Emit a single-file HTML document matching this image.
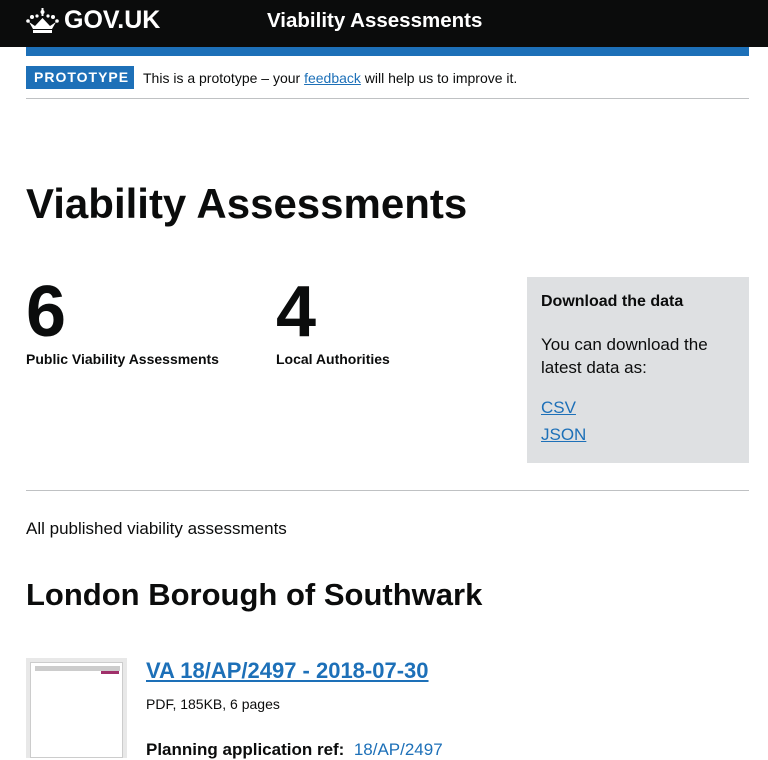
<!DOCTYPE html>
<html><head><style>
*{margin:0;padding:0;box-sizing:border-box}
body{width:768px;height:754px;overflow:hidden;font-family:"Liberation Sans",Arial,sans-serif;color:#0b0c0c;background:#fff;position:relative}
.hdr{position:absolute;left:0;top:0;width:768px;height:47px;background:#0b0c0c;color:#fff}
.a{position:absolute;white-space:nowrap}
a{color:#1d70b8;text-decoration:underline}
</style></head><body>
<div class="hdr">
<svg class="a" style="left:26px;top:8px" width="33" height="27" viewBox="0 0 33 27"><g fill="#fff"><circle cx="16.5" cy="4" r="2"/><rect x="15.5" y="0" width="2" height="8"/><circle cx="6" cy="9" r="2"/><circle cx="27" cy="9" r="2"/><circle cx="2" cy="13" r="1.8"/><circle cx="31" cy="13" r="1.8"/><circle cx="11" cy="8" r="1.6"/><circle cx="22" cy="8" r="1.6"/><path d="M3 14 L7 21 H26 L30 14 L24 18 L16.5 10 L9 18 Z"/><rect x="7" y="22" width="19" height="3"/></g></svg>
<div class="a" style="left:64px;top:6px;font-size:25px;font-weight:bold">GOV.UK</div>
<div class="a" style="left:267px;top:9px;font-size:20.5px;font-weight:bold">Viability Assessments</div>
</div>
<div class="a" style="left:26px;top:47px;width:723px;height:9px;background:#1d70b8"></div>
<div class="a" style="left:26px;top:66px;width:108px;height:23px;background:#1d70b8;color:#fff;font-weight:bold;font-size:14px;letter-spacing:1px;padding:3px 0 0 8px">PROTOTYPE</div>
<div class="a" style="left:143px;top:70px;font-size:14px">This is a prototype – your <a>feedback</a> will help us to improve it.</div>
<div class="a" style="left:26px;top:98px;width:723px;height:1px;background:#bfc1c3"></div>
<div class="a" style="left:26px;top:180px;font-size:42px;font-weight:bold">Viability Assessments</div>
<div class="a" style="left:26px;top:272px;font-size:72px;font-weight:bold;line-height:80px">6</div>
<div class="a" style="left:26px;top:351px;font-size:14px;font-weight:bold">Public Viability Assessments</div>
<div class="a" style="left:276px;top:272px;font-size:72px;font-weight:bold;line-height:80px">4</div>
<div class="a" style="left:276px;top:351px;font-size:14px;font-weight:bold">Local Authorities</div>
<div class="a" style="left:527px;top:277px;width:222px;height:186px;background:#dee0e2"></div>
<div class="a" style="left:541px;top:293px;font-size:16px;font-weight:bold">Download the data</div>
<div class="a" style="left:541px;top:333px;font-size:17px;line-height:23px">You can download the<br>latest data as:</div>
<div class="a" style="left:541px;top:398px;font-size:17px"><a>CSV</a></div>
<div class="a" style="left:541px;top:425px;font-size:17px"><a>JSON</a></div>
<div class="a" style="left:26px;top:490px;width:723px;height:1px;background:#bfc1c3"></div>
<div class="a" style="left:26px;top:519px;font-size:17px">All published viability assessments</div>
<div class="a" style="left:26px;top:577px;font-size:31px;font-weight:bold">London Borough of Southwark</div>
<div class="a" style="left:26px;top:658px;width:101px;height:100px;background:#e8e8e8"></div>
<div class="a" style="left:30px;top:662px;width:93px;height:96px;background:#fff;border:1px solid #ccc">
<div style="position:absolute;left:4px;top:3px;width:85px;height:5px;background:#ccc"></div>
<div style="position:absolute;left:70px;top:8px;width:18px;height:3px;background:#a0306a"></div>
</div>
<div class="a" style="left:146px;top:658px;font-size:22px;font-weight:bold"><a>VA 18/AP/2497 - 2018-07-30</a></div>
<div class="a" style="left:146px;top:696px;font-size:14px">PDF, 185KB, 6 pages</div>
<div class="a" style="left:146px;top:740px;font-size:17px"><b>Planning application ref:</b> &nbsp;<a style="text-decoration:none">18/AP/2497</a></div>
</body></html>
